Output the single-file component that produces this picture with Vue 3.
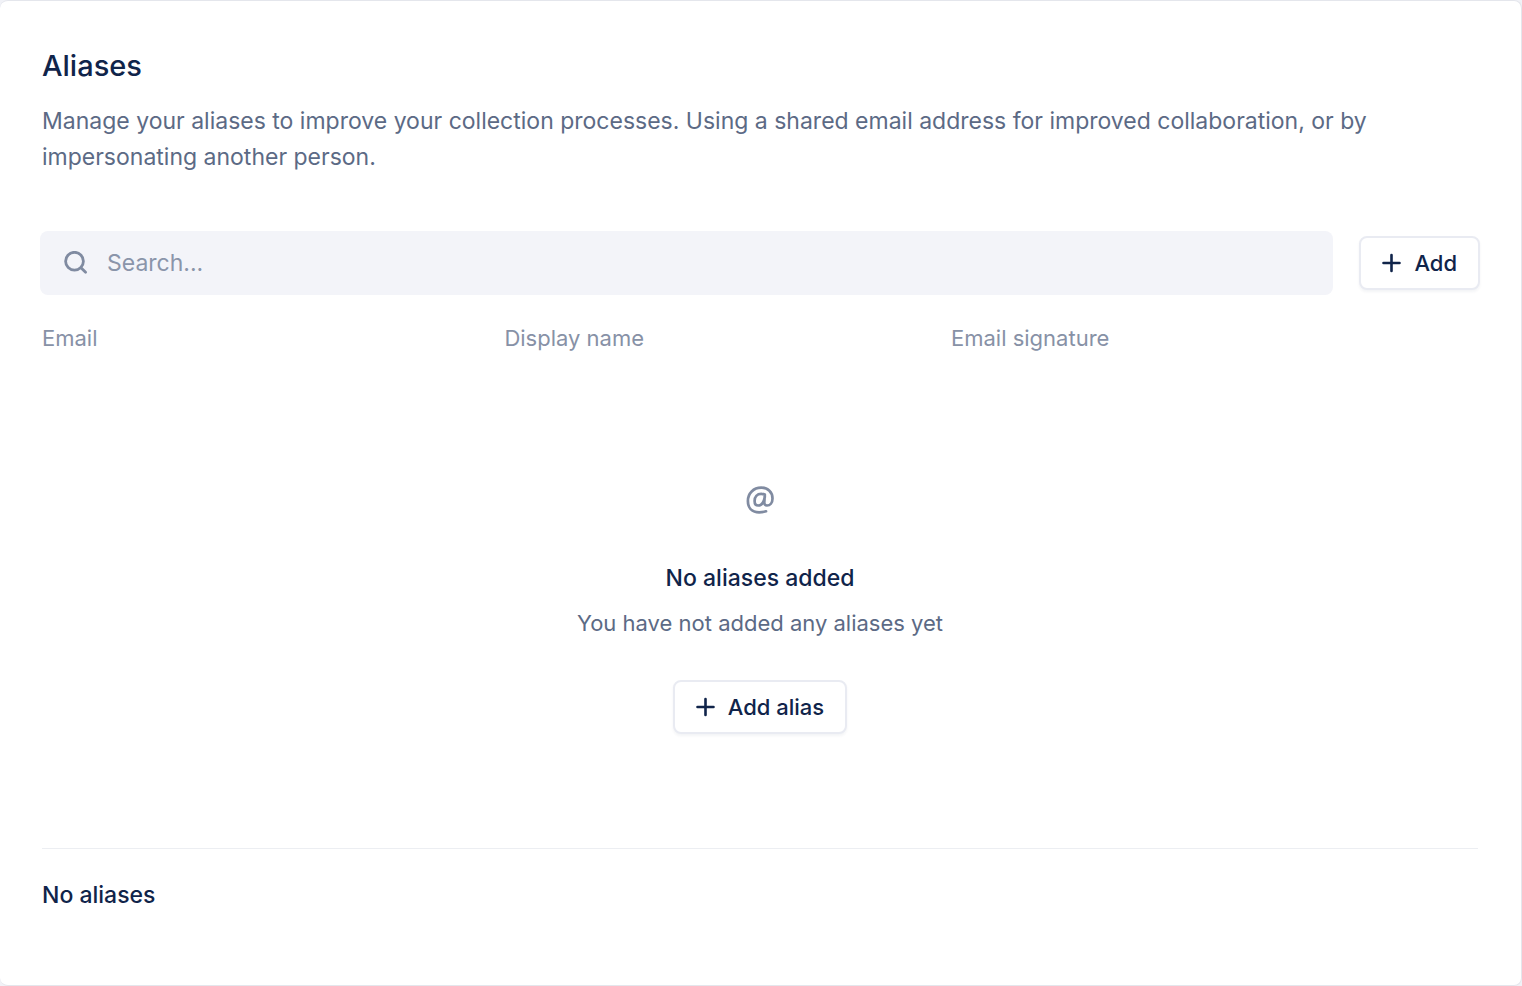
<script setup>
import { ref } from 'vue'

const search = ref('')
const columns = ['Email', 'Display name', 'Email signature']
</script>

<template>
  <main class="card">
    <header class="card-header">
      <h1>Aliases</h1>
      <p>
        Manage your aliases to improve your collection processes. Using a shared email address for
        improved collaboration, or by impersonating another person.
      </p>
    </header>

    <div class="toolbar">
      <label class="search">
        <svg class="search-icon" viewBox="0 0 24 24" aria-hidden="true">
          <circle cx="10.5" cy="10.2" r="8.900" />
          <path d="M17.2 16.900 21.600 21.300" />
        </svg>
        <input v-model="search" type="text" placeholder="Search..." aria-label="Search aliases" />
      </label>
      <button class="btn" type="button">
        <svg class="plus-icon" viewBox="0 0 20 20" aria-hidden="true">
          <path d="M10.500 2v16M2.500 10h16" />
        </svg>
        Add
      </button>
    </div>

    <table class="alias-table">
      <thead>
        <tr>
          <th v-for="column in columns" :key="column" scope="col">{{ column }}</th>
        </tr>
      </thead>
    </table>

    <section class="empty">
      <svg class="at-icon" viewBox="0 0 28 28" aria-hidden="true">
        <path d="M18.800 8.600C17.700 8.100 16.500 7.900 15.200 7.900c-4.100 0-6.600 3.100-6.600 7 0 2.900 1.300 4.600 3.600 4.600 3.200 0 5.700-3.500 6.600-8.500V8.600l-.5 7.700c-.1 2 .9 3.200 2.700 3.200 3 0 5.500-2.700 5.500-7.100 0-6.400-4.500-10.700-11.300-10.700C7.500 1.700 1.900 7.400 1.900 14.900c0 7 4.300 11.400 11.300 11.400 2.400 0 4.700-.3 6.800-1" />
      </svg>
      <h2>No aliases added</h2>
      <p>You have not added any aliases yet</p>
      <button class="btn" type="button">
        <svg class="plus-icon" viewBox="0 0 20 20" aria-hidden="true">
          <path d="M10.500 2v16M2.500 10h16" />
        </svg>
        Add alias
      </button>
    </section>

    <footer class="card-footer">No aliases</footer>
  </main>
</template>

<style>
body {
  background: #f1f2f7;
}
</style>

<style scoped>
.card {
  box-sizing: border-box;
  min-height: 100vh;
  padding: 45px 43px 44px 42px;
  border: 1px solid #e4e6ec;
  border-left: 0;
  border-radius: 8px;
  background: #fff;
  color: #10244a;
  font-family: Inter, sans-serif;
}

h1,
h2,
p {
  margin: 0;
}

h1 {
  font-size: 29px;
  font-weight: 500;
  line-height: 40px;
}

.card-header p {
  margin-top: 17px;
  color: #5c6a85;
  font-size: 23px;
  line-height: 36px;
}

.toolbar {
  display: flex;
  align-items: center;
  gap: 26px;
  margin: 56px -2px 0;
}

.search {
  display: flex;
  flex: 1;
  align-items: center;
  gap: 19px;
  height: 64px;
  padding: 0 24px;
  border-radius: 8px;
  box-sizing: border-box;
  background: #f3f4f9;
}

.search input {
  flex: 1;
  min-width: 0;
  padding: 0;
  border: 0;
  outline: none;
  background: transparent;
  color: #10244a;
  font: 400 23px/32px Inter, sans-serif;
}

.search input::placeholder {
  color: #8a95aa;
  opacity: 1;
}

svg {
  flex: none;
  fill: none;
  stroke: currentColor;
}

.search-icon {
  width: 24px;
  height: 24px;
  color: #808ba1;
  stroke-width: 2.8;
  stroke-linecap: round;
}

.plus-icon {
  width: 20px;
  height: 20px;
  stroke-width: 2.6;
  stroke-linecap: round;
}

.btn {
  display: flex;
  align-items: center;
  gap: 13px;
  height: 54px;
  padding: 0 21px 0 20px;
  border: 2px solid #e9ebf2;
  border-radius: 8px;
  box-sizing: border-box;
  background: #fff;
  box-shadow: 0 2px 3px rgba(16, 36, 74, 0.05);
  color: #10244a;
  font: 500 22px/32px Inter, sans-serif;
  cursor: pointer;
}

.alias-table {
  width: 100%;
  margin-top: 27px;
  border-collapse: collapse;
  table-layout: fixed;
}

.alias-table th {
  padding: 0;
  color: #8791a6;
  font-size: 22px;
  font-weight: 400;
  line-height: 32px;
  text-align: left;
}

.alias-table th:nth-child(1) {
  width: 32.2%;
}

.alias-table th:nth-child(2) {
  width: 31.1%;
}

.empty {
  display: flex;
  flex-direction: column;
  align-items: center;
  padding: 132px 0 114px;
  border-bottom: 1px solid #eceef2;
}

.at-icon {
  width: 28px;
  height: 28px;
  color: #808ba1;
  stroke-width: 2.7;
  stroke-linecap: round;
  stroke-linejoin: round;
}

.empty h2 {
  margin-top: 48px;
  font-size: 23px;
  font-weight: 500;
  line-height: 32px;
}

.empty p {
  margin-top: 13px;
  color: #5c6a85;
  font-size: 22px;
  line-height: 32px;
}

.empty .btn {
  margin-top: 41px;
}

.card-footer {
  margin-top: 30px;
  font-size: 23px;
  font-weight: 500;
  line-height: 32px;
}
</style>
